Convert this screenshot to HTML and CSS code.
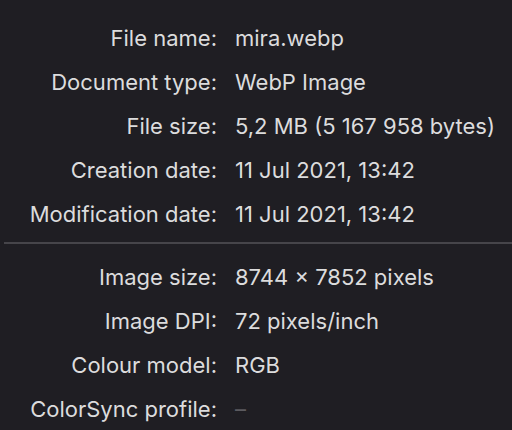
FILE: index.html
```html
<!DOCTYPE html>
<html>
<head>
<meta charset="utf-8">
<link rel="stylesheet" href="styles.css">
</head>
<body>
<div class="panel">
  <div class="group">
    <div class="row"><span class="label">File name:</span><span class="value">mira.webp</span></div>
    <div class="row"><span class="label">Document type:</span><span class="value">WebP Image</span></div>
    <div class="row"><span class="label">File size:</span><span class="value">5,2 MB (5 167 958 bytes)</span></div>
    <div class="row"><span class="label">Creation date:</span><span class="value">11 Jul 2021, 13:42</span></div>
    <div class="row"><span class="label">Modification date:</span><span class="value">11 Jul 2021, 13:42</span></div>
  </div>
  <div class="divider"></div>
  <div class="group">
    <div class="row"><span class="label">Image size:</span><span class="value">8744 × 7852 pixels</span></div>
    <div class="row"><span class="label">Image DPI:</span><span class="value">72 pixels/inch</span></div>
    <div class="row"><span class="label">Colour model:</span><span class="value">RGB</span></div>
    <div class="row"><span class="label">ColorSync profile:</span><span class="value dim">–</span></div>
  </div>
</div>
</body>
</html>
```
FILE: styles.css
```css
html, body {
  margin: 0;
  padding: 0;
  background: #1f1e23;
}
body {
  width: 512px;
  height: 430px;
  overflow: hidden;
  font-family: Inter, "Noto Sans", sans-serif;
  font-size: 22px;
  color: #dcdcdd;
}
.panel {
  padding-top: 16px;
}
.row {
  display: grid;
  grid-template-columns: 217px 1fr;
  column-gap: 18px;
  height: 44px;
  line-height: 44px;
}
.label {
  text-align: right;
  white-space: nowrap;
}
.value {
  white-space: nowrap;
}
.dim {
  color: #5c5b60;
}
.divider {
  height: 2px;
  background: #46454a;
  margin: 6px 0 11px 4px;
}
```
